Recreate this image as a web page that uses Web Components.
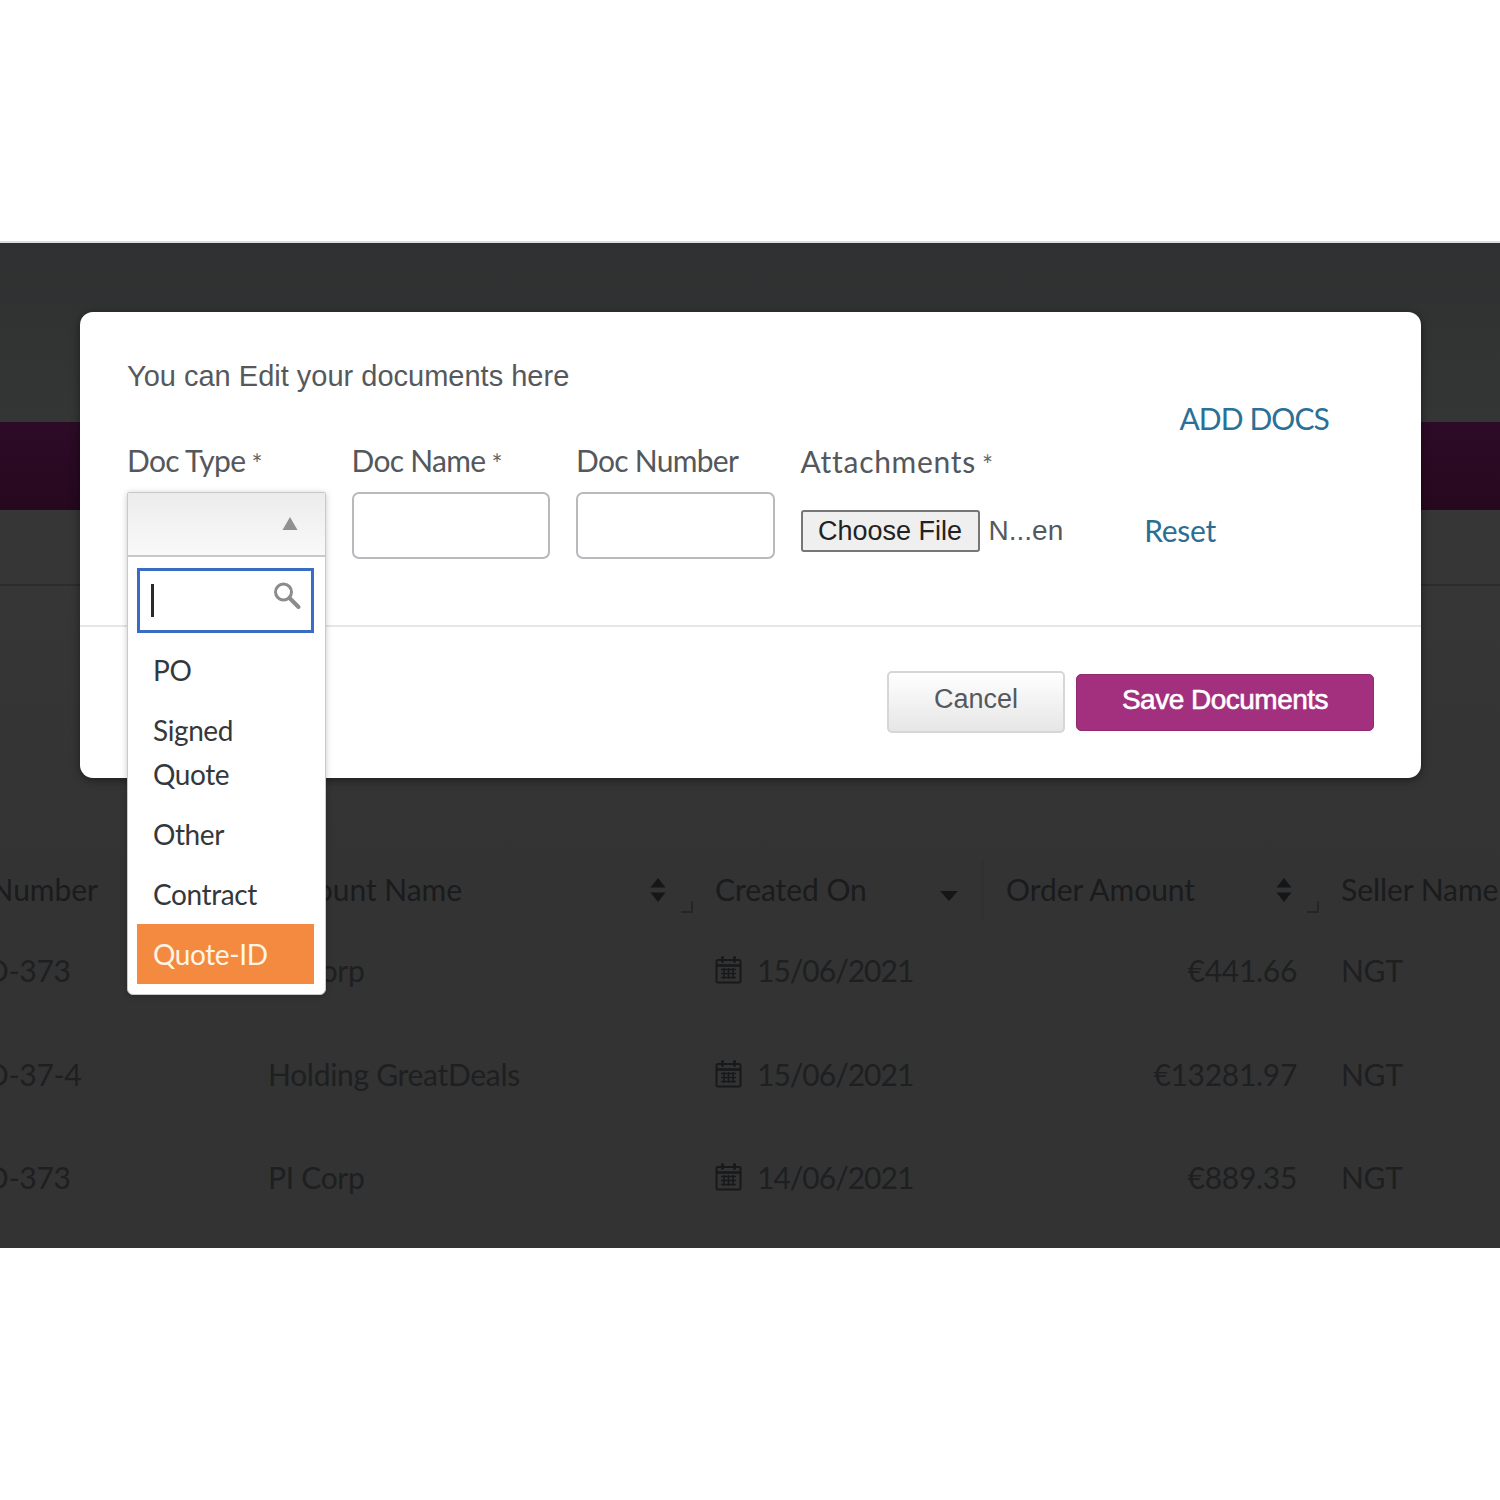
<!DOCTYPE html>
<html>
<head>
<meta charset="utf-8">
<style>
  html, body { margin: 0; padding: 0; background: #fff; }
</style>
</head>
<body>
<app-screen>
  <data-table></data-table>
  <doc-modal slot="modal"></doc-modal>
</app-screen>

<script>
class AppScreen extends HTMLElement {
  constructor() {
    super();
    const shadow = this.attachShadow({ mode: 'open' });
    shadow.innerHTML = `
      <style>
        :host { display: block; height: 1500px; background: #fff; font-family: "Lato", sans-serif; }
        .top { height: 241px; border-bottom: 2px solid #dcdcdc; background: #fff; }
        .screen {
          position: relative;
          height: 1005px;
          overflow: hidden;
          background: #333333;
        }
        .head { height: 179px; background: linear-gradient(#2f3031, #343635); }
        .band { height: 88px; background: linear-gradient(#2d0b27, #25081e); }
        .sub { height: 74px; border-bottom: 2px solid #2b2c2d; background: #363636; }
        .gap { height: 273px; background: linear-gradient(#363636, #333333); }
        .modal { position: absolute; left: 80px; top: 69px; width: 1341px; }
      </style>
      <div class="top"></div>
      <div class="screen">
        <div class="head"></div>
        <div class="band"></div>
        <div class="sub"></div>
        <div class="gap"></div>
        <slot></slot>
        <div class="modal"><slot name="modal"></slot></div>
      </div>
    `;
  }
}

class DataTable extends HTMLElement {
  constructor() {
    super();
    const shadow = this.attachShadow({ mode: 'open' });
    const cal = `<svg width="27" height="28" viewBox="0 0 27 28" fill="none" stroke="#17191b" stroke-width="2">
      <rect x="1.5" y="4" width="24" height="22.5" rx="1.5"/>
      <path d="M7.5 0.5v6M19.5 0.5v6" stroke-width="3"/>
      <path d="M1.5 9.5h24" stroke-width="2.5"/>
      <path d="M6 13.5h15M6 17.5h15M6 21.5h15M9 12v11M13.5 12v11M18 12v11" stroke-width="1.6"/>
    </svg>`;
    const sort = `<svg class="sort" width="16" height="26" viewBox="0 0 16 26" fill="#141618">
      <path d="M8 1l7.5 9.5H.5zM8 25L.5 15.500h15z"/></svg>`;
    const caret = `<svg class="sort caret" width="18" height="10" viewBox="0 0 18 10" fill="#141618"><path d="M0 0h18L9 10z"/></svg>`;
    const rows = [
      ['PO-373', 'PI Corp', '15/06/2021', '€441.66', 'NGT'],
      ['PO-37-4', 'Holding GreatDeals', '15/06/2021', '€13281.97', 'NGT'],
      ['PO-373', 'PI Corp', '14/06/2021', '€889.35', 'NGT']
    ];
    shadow.innerHTML = `
      <style>
        :host { display: block; position: absolute; left: -64px; top: 616px; width: 1700px; color: #1d1f21; font: 30px/36px "Lato", sans-serif; letter-spacing: -0.3px; }
        .grid { display: grid; grid-template-columns: 318px 447px 291px 335px 309px; }
        .th { height: 60px; display: flex; align-items: center; padding-left: 14px; box-sizing: border-box; position: relative; white-space: nowrap; color: #191b1d; letter-spacing: -0.05px; }
        .td { height: 103.500px; display: flex; align-items: center; gap: 15px; padding-left: 14px; padding-bottom: 1px; box-sizing: border-box; white-space: nowrap; }
        .th.first { padding-left: 5px; }
        .td.first { padding-left: 31px; }
        .date { letter-spacing: -1px; }
        .num { justify-content: flex-end; padding-right: 30px; }
        .sort { position: absolute; right: 35px; top: 18px; }
        .caret { top: 32px; right: 34px; }
        .rs { position: absolute; right: 8px; bottom: 6px; width: 10px; height: 10px; border-right: 2px solid #232526; border-bottom: 2px solid #232526; }
        .sep::after { content: ""; position: absolute; right: 8px; top: 0; bottom: 0; width: 2px; background: #2e3031; }
      </style>
      <div class="grid">
        <div class="th first">PO Number</div>
        <div class="th">Account Name ${sort}<i class="rs"></i></div>
        <div class="th sep">Created On ${caret}</div>
        <div class="th">Order Amount ${sort}<i class="rs"></i></div>
        <div class="th">Seller Name</div>
        ${rows.map(r => `
          <div class="td first">${r[0]}</div>
          <div class="td">${r[1]}</div>
          <div class="td">${cal}<span class="date">${r[2]}</span></div>
          <div class="td num">${r[3]}</div>
          <div class="td">${r[4]}</div>
        `).join('')}
      </div>
    `;
  }
}

class DocField extends HTMLElement {
  constructor() {
    super();
    const shadow = this.attachShadow({ mode: 'open' });
    const req = this.hasAttribute('required') ? '<span class="req">*</span>' : '';
    shadow.innerHTML = `
      <style>
        :host { display: block; width: 198.500px; font-family: "Lato", sans-serif; }
        label { display: block; height: 36px; line-height: 34px; margin-bottom: 13px; font-size: 30px; color: #54585c; white-space: nowrap; letter-spacing: -0.7px; }
        .req { font-size: 26px; line-height: 0; margin-left: 6px; vertical-align: -2px; color: #666; }
        .input { display: block; box-sizing: border-box; width: 198.500px; height: 67px; border: 2px solid #b9b9bd; border-radius: 7px; background: #fff; }
      </style>
      <label>${this.getAttribute('label')}${req}</label>
      <slot><div class="input"></div></slot>
    `;
  }
}

class DocSelect extends HTMLElement {
  constructor() {
    super();
    const shadow = this.attachShadow({ mode: 'open' });
    shadow.innerHTML = `
      <style>
        :host { display: block; position: relative; height: 67px; font-family: "Lato", sans-serif; }
        .menu {
          position: absolute; left: 0; top: 0; width: 198.500px; box-sizing: border-box; height: 503px;
          background: #fff; border: 1px solid #c9c9c9; border-radius: 2px 2px 6px 6px;
          box-shadow: 0 1px 6px rgba(0,0,0,.22); overflow: hidden;
        }
        .head {
          height: 64px; box-sizing: border-box; position: relative;
          background: linear-gradient(#ececec, #f9f9f9); border-bottom: 2px solid #c9c9c9;
        }
        .head svg { position: absolute; left: 154px; top: 24px; }
        .search {
          position: relative; margin: 11px 11px 7px 9px; height: 65px; box-sizing: border-box;
          border: 3px solid #3b6cc4; background: #fff;
        }
        .cursor { position: absolute; left: 11px; top: 13px; width: 3px; height: 33px; background: #2b2b2b; }
        .search svg { position: absolute; left: 132px; top: 10px; }
        .opts { margin: 0 10.500px 0 9px; }
        .opt { padding: 8px 16px; font-size: 28px; line-height: 44px; color: #35383b; letter-spacing: -0.4px; }
        .opt.on { background: #f38a40; color: #fff4e6; }
      </style>
      <div class="menu">
        <div class="head">
          <svg width="16" height="13" viewBox="0 0 16 13"><path d="M8 0l7.500 13H.5z" fill="#909090"/></svg>
        </div>
        <div class="search">
          <div class="cursor"></div>
          <svg width="30" height="30" viewBox="0 0 30 30" fill="none">
            <circle cx="11.500" cy="11" r="8" stroke="#8c8c8c" stroke-width="3"/>
            <path d="M17.500 17l9 9" stroke="#8c8c8c" stroke-width="4" stroke-linecap="round"/>
          </svg>
        </div>
        <div class="opts">
          <div class="opt">PO</div>
          <div class="opt">Signed<br>Quote</div>
          <div class="opt">Other</div>
          <div class="opt">Contract</div>
          <div class="opt on">Quote-ID</div>
        </div>
      </div>
    `;
  }
}

class DocModal extends HTMLElement {
  constructor() {
    super();
    const shadow = this.attachShadow({ mode: 'open' });
    shadow.innerHTML = `
      <style>
        :host { display: block; background: #fff; border-radius: 13px; box-shadow: 0 2px 8px rgba(0,0,0,.45); height: 466px; font-family: "Lato", sans-serif; }
        .body { height: 315px; box-sizing: border-box; padding: 46px 47px 0 47px; border-bottom: 2px solid #e6e6e6; }
        .title { font: 29px/36px "Liberation Sans", sans-serif; color: #55595d; }
        .add { margin-top: 6px; height: 36px; text-align: right; padding-right: 45px; font-size: 30px; line-height: 36px; color: #2a7097; letter-spacing: -0.9px; }
        .fields { margin-top: 7px; display: flex; gap: 26px; }
        .attach { width: 520px; }
        .attach label { display: block; height: 36px; line-height: 36px; font-size: 30px; color: #54585c; letter-spacing: 0.7px; }
        .req { font-size: 26px; line-height: 0; margin-left: 6px; vertical-align: -2px; color: #666; }
        .file { margin-top: 31px; display: flex; align-items: center; }
        .file button {
          width: 179px; height: 42px; padding: 0; margin: 0; box-sizing: border-box; border: 2px solid #767676; border-radius: 3px;
          background: #efefef; color: #222; font: 27px "Liberation Sans", sans-serif;
        }
        .file span { margin-left: 9px; font: 28px "Liberation Sans", sans-serif; color: #55595d; }
        .file a { margin-left: 81px; font-size: 30px; line-height: 36px; margin-top: -2px; color: #2a6f93; letter-spacing: -0.3px; }
        .foot { display: flex; justify-content: flex-end; align-items: flex-start; gap: 11px; padding: 44px 47px 0; }
        .btn { box-sizing: border-box; font: 27px "Liberation Sans", sans-serif; padding: 0 0 6px; }
        .cancel { width: 178px; height: 62px; background: linear-gradient(#fff, #e6e6e6); border: 2px solid #d6d6d6; border-radius: 5px; color: #55595d; }
        .save { width: 298px; height: 57px; margin-top: 3px; padding-bottom: 6px; font-size: 28px; background: #a32f7f; border: 1px solid #8f2a70; border-radius: 5px; color: #fff; letter-spacing: -0.5px; -webkit-text-stroke: 0.6px #fff; }
      </style>
      <div class="body">
        <div class="title">You can Edit your documents here</div>
        <div class="add">ADD DOCS</div>
        <div class="fields">
          <doc-field label="Doc Type" required><doc-select></doc-select></doc-field>
          <doc-field label="Doc Name" required></doc-field>
          <doc-field label="Doc Number"></doc-field>
          <div class="attach">
            <label>Attachments<span class="req">*</span></label>
            <div class="file">
              <button>Choose File</button><span>N...en</span><a>Reset</a>
            </div>
          </div>
        </div>
      </div>
      <div class="foot">
        <button class="btn cancel">Cancel</button>
        <button class="btn save">Save Documents</button>
      </div>
    `;
  }
}

customElements.define('app-screen', AppScreen);
customElements.define('data-table', DataTable);
customElements.define('doc-field', DocField);
customElements.define('doc-select', DocSelect);
customElements.define('doc-modal', DocModal);
</script>
</body>
</html>
